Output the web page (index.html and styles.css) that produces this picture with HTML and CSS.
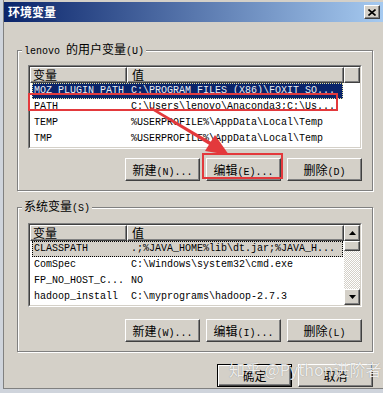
FILE: index.html
```html
<!DOCTYPE html>
<html lang="zh-CN">
<head>
    <meta charset="UTF-8">
    <title>环境变量</title>
    <link rel="stylesheet" href="styles.css">
</head>
<body>
    <div class="window">
        <div class="titlebar">
            <span class="title">环境变量</span>
            <span class="close raised">
                <svg width="8" height="7" viewBox="0 0 8 7"><path d="M0.5 0.5 L7.5 6.5 M7.5 0.5 L0.5 6.5" stroke="#000" stroke-width="1.6" fill="none"/></svg>
            </span>
        </div>

        <div class="content">
            <fieldset class="group">
                <legend><span class="en">lenovo </span>的用户变量<span class="en">(U)</span></legend>
                <div class="group-body">
                    <div class="list">
                        <div class="list-inner">
                            <div class="list-table">
                                <div class="list-head">
                                    <span class="hcell c1">变量</span>
                                    <span class="hcell c2">值</span>
                                    <span class="hcell fill"></span>
                                </div>
                                <div class="row sel">
                                    <span class="c1 en">MOZ_PLUGIN_PATH</span>
                                    <span class="c2 en">C:\PROGRAM FILES (X86)\FOXIT SO...</span>
                                </div>
                                <div class="row">
                                    <span class="c1 en">PATH</span>
                                    <span class="c2 en">C:\Users\lenovo\Anaconda3;C:\Us...</span>
                                </div>
                                <div class="row">
                                    <span class="c1 en">TEMP</span>
                                    <span class="c2 en">%USERPROFILE%\AppData\Local\Temp</span>
                                </div>
                                <div class="row">
                                    <span class="c1 en">TMP</span>
                                    <span class="c2 en">%USERPROFILE%\AppData\Local\Temp</span>
                                </div>
                            </div>
                        </div>
                    </div>
                    <div class="btn-row">
                        <button class="btn">新建<span class="en">(N)...</span></button>
                        <button class="btn">编辑<span class="en">(E)...</span></button>
                        <button class="btn">删除<span class="en">(D)</span></button>
                    </div>
                </div>
            </fieldset>

            <fieldset class="group group-sys">
                <legend>系统变量<span class="en">(S)</span></legend>
                <div class="group-body">
                    <div class="list">
                        <div class="list-inner">
                            <div class="list-table">
                                <div class="list-head">
                                    <span class="hcell c1">变量</span>
                                    <span class="hcell c2">值</span>
                                </div>
                                <div class="row sel-grey">
                                    <span class="c1 en">CLASSPATH</span>
                                    <span class="c2 en">.;%JAVA_HOME%lib\dt.jar;%JAVA_H...</span>
                                </div>
                                <div class="row">
                                    <span class="c1 en">ComSpec</span>
                                    <span class="c2 en">C:\Windows\system32\cmd.exe</span>
                                </div>
                                <div class="row">
                                    <span class="c1 en">FP_NO_HOST_C...</span>
                                    <span class="c2 en">NO</span>
                                </div>
                                <div class="row">
                                    <span class="c1 en">hadoop_install</span>
                                    <span class="c2 en">C:\myprograms\hadoop-2.7.3</span>
                                </div>
                            </div>
                            <div class="scrollbar">
                                <span class="sb-btn raised">
                                    <svg width="7" height="4" viewBox="0 0 7 4"><path d="M3.5 0 L7 4 L0 4 Z" fill="#000"/></svg>
                                </span>
                                <span class="sb-thumb raised"></span>
                                <span class="sb-space"></span>
                                <span class="sb-btn raised">
                                    <svg width="7" height="4" viewBox="0 0 7 4"><path d="M0 0 L7 0 L3.5 4 Z" fill="#000"/></svg>
                                </span>
                            </div>
                        </div>
                    </div>
                    <div class="btn-row">
                        <button class="btn">新建<span class="en">(W)...</span></button>
                        <button class="btn">编辑<span class="en">(I)...</span></button>
                        <button class="btn">删除<span class="en">(L)</span></button>
                    </div>
                </div>
            </fieldset>

            <div class="btn-row dialog-btns">
                <button class="btn btn-default">确定</button>
                <button class="btn">取消</button>
            </div>
        </div>
    </div>

    <!-- red marks drawn over the screenshot -->
    <svg class="marks" width="383" height="393" viewBox="0 0 383 393">
        <rect x="29" y="94" width="308" height="16" fill="none" stroke="#e3393c" stroke-width="2"/>
        <rect x="203" y="154" width="79" height="24" fill="none" stroke="#e3393c" stroke-width="2"/>
        <path d="M150 109 L151.5 107 L213 143 L211 146 Z" fill="#e3393c"/>
        <path d="M229 155 L205 151 L215 135 Z" fill="#e3393c"/>
    </svg>

    <div class="watermark">知乎 @Python进阶者</div>
</body>
</html>
```

FILE: styles.css
```css
body {
    margin: 0;
    background-color: #cfd4dc;
    font-family: "Noto Sans CJK SC", sans-serif;
    font-size: 12px;
    color: #000;
}
.en {
    font-family: "Liberation Mono", monospace;
    font-size: 10px;
}
.raised {
    box-sizing: border-box;
    background-color: #d4d0c8;
    border: 1px solid;
    border-color: #fff #404040 #404040 #fff;
    box-shadow: inset -1px -1px #808080;
}
.window {
    margin-left: 3px;
    width: 380px;
    height: 389px;
    box-sizing: border-box;
    padding-top: 2px;
    background-color: #d4d0c8;
    border-left: 1px solid #808080;
    border-bottom: 1px solid #808080;
}
.titlebar {
    height: 20px;
    display: flex;
    align-items: center;
    justify-content: space-between;
    padding: 0 3px 0 4px;
    background: linear-gradient(to right, #0a246a, #a6caf0);
}
.title {
    color: #fff;
    font-weight: bold;
    line-height: 20px;
}
.close {
    width: 16px;
    height: 14px;
    display: flex;
    align-items: center;
    justify-content: center;
}
.content {
    padding: 20px 10px 0 13px;
}
.group {
    margin: 0;
    padding: 0;
    min-width: 0;
    border: 1px solid #808080;
    box-shadow: inset 1px 1px #fff, 1px 1px #fff;
}
.group + .group {
    margin-top: 8px;
}
legend {
    margin-left: 4px;
    padding: 0 2px;
    line-height: 14px;
    background-color: #d4d0c8;
}
.group-body {
    padding: 6px 10px 9px;
}
.group-sys .group-body {
    padding-top: 7px;
}
.list {
    border: 1px solid;
    border-color: #808080 #fff #fff #808080;
}
.list-inner {
    display: flex;
    border: 1px solid;
    border-color: #404040 #d4d0c8 #d4d0c8 #404040;
    background-color: #fff;
    height: 80px;
}
.list-table {
    flex: 1;
    min-width: 0;
}
.list-head {
    display: flex;
    height: 16px;
}
.hcell {
    box-sizing: border-box;
    height: 16px;
    line-height: 14px;
    padding-left: 4px;
    background-color: #d4d0c8;
    border: 1px solid;
    border-color: #fff #404040 #404040 #fff;
    box-shadow: inset -1px -1px #808080;
}
.hcell.c1 {
    width: 97px;
    padding-left: 2px;
}
.hcell.c2 {
    width: 217px;
}
.hcell.fill {
    flex: 1;
}
.row {
    display: flex;
    width: 311px;
    height: 16px;
    line-height: 16px;
    margin-left: 2px;
    white-space: nowrap;
}
.row .c1 {
    width: 95px;
    box-sizing: border-box;
    padding-left: 2px;
    overflow: hidden;
}
.row .c2 {
    padding-left: 4px;
    overflow: hidden;
}
.row.sel {
    background-color: #0a246a;
    color: #e8ecf4;
    outline: 1px dotted #e8e4a0;
    outline-offset: -1px;
}
.row.sel-grey {
    background-color: #d4d0c8;
    outline: 1px dotted #000;
    outline-offset: -1px;
}
.scrollbar {
    width: 16px;
    display: flex;
    flex-direction: column;
    background: repeating-conic-gradient(#fff 0 25%, #d4d0c8 0 50%) 0 0 / 2px 2px;
}
.sb-btn {
    height: 16px;
    display: flex;
    align-items: center;
    justify-content: center;
}
.sb-thumb {
    height: 10px;
}
.sb-space {
    flex: 1;
}
.btn-row {
    display: flex;
    justify-content: flex-end;
    gap: 6px;
    margin-top: 9px;
}
.group-sys .btn-row {
    margin-top: 12px;
}
.dialog-btns {
    margin-top: 12px;
}
.btn {
    width: 75px;
    height: 23px;
    padding: 0;
    box-sizing: border-box;
    font-family: "Noto Sans CJK SC", sans-serif;
    font-size: 12px;
    line-height: 21px;
    color: #000;
    background-color: #d4d0c8;
    border: 1px solid;
    border-color: #fff #404040 #404040 #fff;
    box-shadow: inset -1px -1px #808080;
}
.btn-default {
    border-color: #000;
    box-shadow: inset 1px 1px #fff, inset -1px -1px #404040, inset -2px -2px #808080;
}
.marks {
    position: absolute;
    left: 0;
    top: 0;
    pointer-events: none;
}
.watermark {
    position: absolute;
    left: 229px;
    top: 359px;
    font-size: 16px;
    line-height: 20px;
    color: rgba(255, 255, 255, 0.85);
    text-shadow: 0 0 1px rgba(0, 0, 0, 0.35);
    white-space: nowrap;
}
```
